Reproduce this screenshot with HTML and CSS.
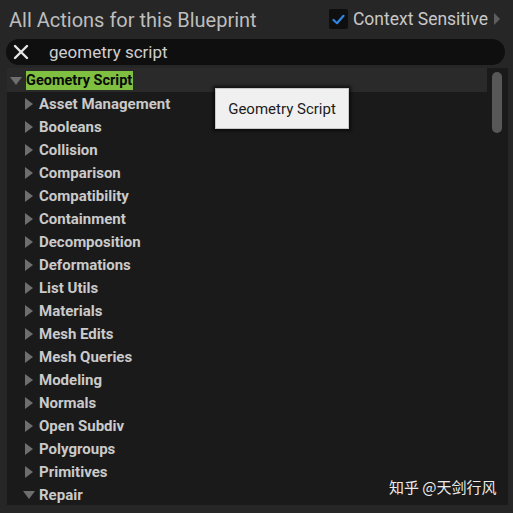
FILE: index.html
```html
<!DOCTYPE html>
<html>
<head>
<meta charset="utf-8">
<link rel="stylesheet" href="styles.css">
</head>
<body>
<div class="app">
  <div class="header">
    <div class="title">All Actions for this Blueprint</div>
    <div class="ctx">
      <span class="check"><svg width="13" height="11" viewBox="0 0 13 11"><path d="M1.5 6 L5 9.2 L11.5 1.8" fill="none" stroke="#2f86e0" stroke-width="2.2" stroke-linecap="round" stroke-linejoin="round"/></svg></span>
      <span class="ctx-label">Context Sensitive</span>
      <span class="ctx-arrow"></span>
    </div>
  </div>
  <div class="search">
    <svg class="x" width="16" height="16" viewBox="0 0 16 16"><path d="M2 2 L14 14 M14 2 L2 14" stroke="#e6e6e6" stroke-width="2.4" stroke-linecap="round"/></svg>
    <span class="query">geometry script</span>
  </div>
  <div class="panel">
    <div class="list">
      <div class="row root"><span class="tri down"></span><span class="hl">Geometry Script</span></div>
      <div class="row"><span class="tri right"></span><span class="name">Asset Management</span></div>
      <div class="row"><span class="tri right"></span><span class="name">Booleans</span></div>
      <div class="row"><span class="tri right"></span><span class="name">Collision</span></div>
      <div class="row"><span class="tri right"></span><span class="name">Comparison</span></div>
      <div class="row"><span class="tri right"></span><span class="name">Compatibility</span></div>
      <div class="row"><span class="tri right"></span><span class="name">Containment</span></div>
      <div class="row"><span class="tri right"></span><span class="name">Decomposition</span></div>
      <div class="row"><span class="tri right"></span><span class="name">Deformations</span></div>
      <div class="row"><span class="tri right"></span><span class="name">List Utils</span></div>
      <div class="row"><span class="tri right"></span><span class="name">Materials</span></div>
      <div class="row"><span class="tri right"></span><span class="name">Mesh Edits</span></div>
      <div class="row"><span class="tri right"></span><span class="name">Mesh Queries</span></div>
      <div class="row"><span class="tri right"></span><span class="name">Modeling</span></div>
      <div class="row"><span class="tri right"></span><span class="name">Normals</span></div>
      <div class="row"><span class="tri right"></span><span class="name">Open Subdiv</span></div>
      <div class="row"><span class="tri right"></span><span class="name">Polygroups</span></div>
      <div class="row"><span class="tri right"></span><span class="name">Primitives</span></div>
      <div class="row"><span class="tri down child"></span><span class="name">Repair</span></div>
    </div>
    <div class="scroll"><div class="thumb"></div></div>
    <div class="tooltip">Geometry Script</div>
    <div class="watermark">知乎 @天剑行风</div>
  </div>
</div>
</body>
</html>
```
FILE: styles.css
```css
html, body {
  margin: 0;
  padding: 0;
  background: #262626;
}
.app {
  width: 513px;
  height: 513px;
  overflow: hidden;
  font-family: Roboto, "Noto Sans CJK SC", sans-serif;
  display: flex;
  flex-direction: column;
}
.header {
  height: 38px;
  display: flex;
  align-items: center;
  justify-content: space-between;
  padding: 0 13px 0 9px;
  box-sizing: border-box;
}
.title {
  color: #bdbdbd;
  font-size: 20px;
  margin-top: 1px;
}
.ctx {
  display: flex;
  align-items: center;
}
.check {
  width: 19px;
  height: 20px;
  background: #0f0f0f;
  border-radius: 2px;
  display: flex;
  align-items: center;
  justify-content: center;
  margin-right: 5px;
}
.ctx-label {
  color: #c8c8c8;
  font-size: 17.5px;
}
.ctx-arrow {
  width: 0;
  height: 0;
  border-top: 6px solid transparent;
  border-bottom: 6px solid transparent;
  border-left: 6px solid #5e5e5e;
  margin-left: 6px;
}
.search {
  height: 26px;
  margin: 1px 8px 0 6px;
  background: #0f0f0f;
  border-radius: 13px;
  display: flex;
  align-items: center;
  padding-left: 7px;
}
.x {
  margin-right: 20px;
}
.query {
  color: #cfcfcf;
  font-size: 17px;
}
.panel {
  position: relative;
  margin: 3px 5px 0 7px;
  height: 437px;
  background: #1a1a1a;
  display: flex;
}
.list {
  flex: 1;
  padding-top: 1px;
}
.row {
  height: 23px;
  display: flex;
  align-items: center;
  padding-left: 18px;
}
.row.root {
  background: #2a2a2a;
  padding-left: 3px;
  margin-top: -1px;
  padding-top: 1px;
}
.tri.right {
  width: 0;
  height: 0;
  border-top: 6px solid transparent;
  border-bottom: 6px solid transparent;
  border-left: 8px solid #6e6e6e;
  margin-right: 6px;
}
.tri.down {
  width: 0;
  height: 0;
  border-left: 6px solid transparent;
  border-right: 6px solid transparent;
  border-top: 8px solid #6e6e6e;
  margin-right: 4px;
}
.tri.down.child {
  margin-left: -2px;
  margin-right: 4px;
}
.hl {
  background: #80c040;
  color: #0a0a0a;
  font-weight: bold;
  font-size: 14.5px;
  padding: 1px 1px 1px 0;
  line-height: 17px;
}
.name {
  color: #cacaca;
  font-weight: bold;
  font-size: 15px;
}
.scroll {
  width: 21px;
  box-sizing: border-box;
  padding: 4px 0 0 5px;
}
.thumb {
  width: 10px;
  height: 61px;
  background: #575757;
  border-radius: 5px;
}
.tooltip {
  position: absolute;
  left: 208px;
  top: 20px;
  width: 134px;
  height: 41px;
  box-sizing: border-box;
  background: #f0f0f0;
  border: 1px solid #c8c8c8;
  box-shadow: 0 0 3px 2px rgba(0,0,0,0.6);
  color: #1c1c1c;
  font-size: 15px;
  display: flex;
  align-items: center;
  justify-content: center;
}
.watermark {
  position: absolute;
  left: 382px;
  top: 408px;
  color: #ececec;
  font-size: 15px;
  font-family: "Noto Sans CJK SC", sans-serif;
}
```
